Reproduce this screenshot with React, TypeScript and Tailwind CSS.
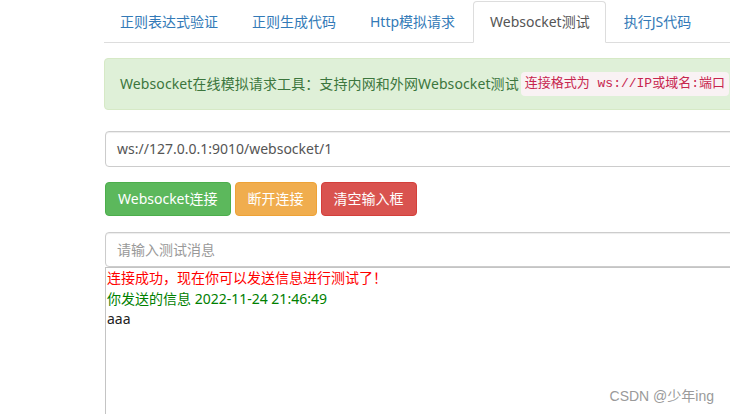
import React from "react";

const tabs = ["正则表达式验证", "正则生成代码", "Http模拟请求", "Websocket测试", "执行JS代码"];

export default function App() {
  return (
    <div className="relative w-[730px] h-[414px] overflow-hidden bg-white font-['Noto_Sans','Noto_Sans_CJK_SC',sans-serif] text-[14px] leading-[20px] text-[#333]">
      <div className="w-[1000px] pl-[104px]">
        <ul className="mt-[1px] flex border-b border-[#ddd]">
          {tabs.map((t, i) => {
            const active = i === 3;
            return (
              <li key={t} className="mb-[-1px] mr-[2px] shrink-0">
                <span
                  className={
                    active
                      ? "block whitespace-nowrap rounded-t-[4px] border border-[#ddd] border-b-transparent bg-white pl-[16px] pr-[15px] py-[10px] text-[#555]"
                      : "block whitespace-nowrap rounded-t-[4px] border border-transparent pl-[15px] pr-[15px] py-[10px] text-[#337ab7]"
                  }
                >
                  {t}
                </span>
              </li>
            );
          })}
        </ul>

        <div className="mt-[15px] flex h-[52px] items-center rounded-[4px] border border-[#d6e9c6] bg-[#dff0d8] px-[15px] text-[#3c763d]">
          <span className="whitespace-nowrap tracking-[0.1px]">Websocket在线模拟请求工具：支持内网和外网Websocket测试</span>
          <code className="ml-[2px] whitespace-nowrap rounded-[4px] bg-[#f9f2f4] px-[4px] py-[2px] font-['Liberation_Mono','Noto_Sans_CJK_SC',monospace] text-[13px] text-[#c7254e]">
            连接格式为 ws://IP或域名:端口
          </code>
        </div>

        <div className="mt-[21px] ml-[1px] flex h-[36px] items-center rounded-[4px] border border-[#ccc] px-[11px] text-[#555] shadow-[inset_0_1px_1px_rgba(0,0,0,0.075)]">
          ws://127.0.0.1:9010/websocket/1
        </div>

        <div className="mt-[15px] ml-[1px] flex gap-[4px]">
          <button className="h-[34px] rounded-[4px] border border-[#4cae4c] bg-[#5cb85c] px-[12px] text-white">Websocket连接</button>
          <button className="h-[34px] rounded-[4px] border border-[#eea236] bg-[#f0ad4e] px-[12px] text-white">断开连接</button>
          <button className="h-[34px] rounded-[4px] border border-[#d43f3a] bg-[#d9534f] px-[12px] text-white">清空输入框</button>
        </div>

        <div className="mt-[16px] ml-[1px] flex h-[35px] items-center rounded-[4px] border border-[#ccc] px-[11px] text-[#999] shadow-[inset_0_1px_1px_rgba(0,0,0,0.075)]">
          请输入测试消息
        </div>

        <div className="ml-[1px] h-[200px] border border-[#c4c4c4] pl-[1px] leading-[20.5px]">
          <div className="text-[#ff0000]">连接成功，现在你可以发送信息进行测试了！</div>
          <div className="text-[#008000]">你发送的信息 2022-11-24 21:46:49</div>
          <div className="text-[#222]">aaa</div>
        </div>
      </div>

      <div className="absolute right-[16px] bottom-[8px] text-[14px] text-[#9a9a9a] font-['Liberation_Sans','Noto_Sans_CJK_SC',sans-serif]">
        CSDN @少年ing
      </div>
    </div>
  );
}
